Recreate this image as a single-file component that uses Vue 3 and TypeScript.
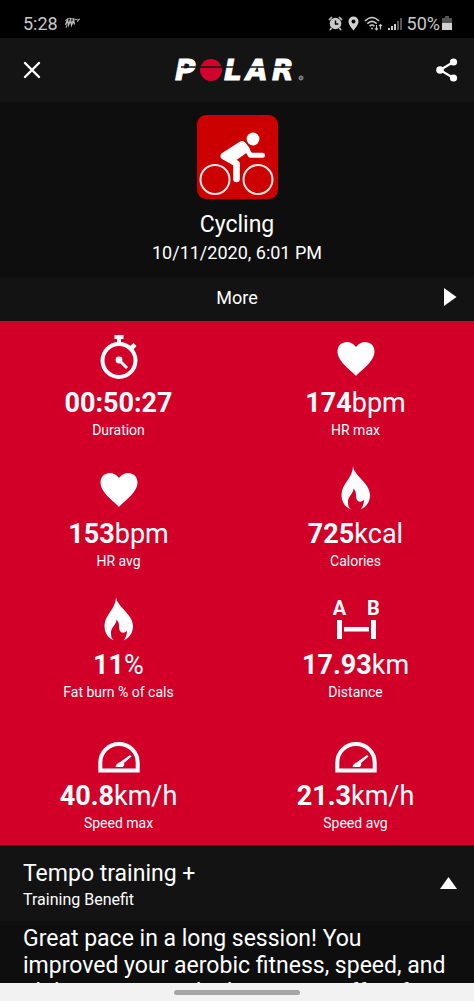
<script setup lang="ts">
import { ref } from 'vue'

type IconName = 'stopwatch' | 'heart' | 'flame' | 'distance' | 'gauge'

interface Metric {
  icon: IconName
  value: string
  unit: string
  label: string
}

const metrics: Metric[] = [
  { icon: 'stopwatch', value: '00:50:27', unit: '', label: 'Duration' },
  { icon: 'heart', value: '174', unit: 'bpm', label: 'HR max' },
  { icon: 'heart', value: '153', unit: 'bpm', label: 'HR avg' },
  { icon: 'flame', value: '725', unit: 'kcal', label: 'Calories' },
  { icon: 'flame', value: '11', unit: '%', label: 'Fat burn % of cals' },
  { icon: 'distance', value: '17.93', unit: 'km', label: 'Distance' },
  { icon: 'gauge', value: '40.8', unit: 'km/h', label: 'Speed max' },
  { icon: 'gauge', value: '21.3', unit: 'km/h', label: 'Speed avg' },
]

const benefitOpen = ref(true)
</script>

<template>
  <div class="screen">
    <div class="status">
      <span>5:28</span>
      <svg class="carrier" width="17" height="12" viewBox="0 0 17 12" fill="none" stroke="#b5b5b5">
        <path d="M1 3.500Q5 0 10 2T16 2M14.500 2.500 13.500 5M2 11 3 8" stroke-width="1" />
        <path d="M1.500 8 3.500 3 4.500 8 6.500 3 7.500 8 9.500 3 10.500 7.500" stroke-width="1.500" />
      </svg>
      <div class="status-icons">
        <svg width="15" height="15" viewBox="0 0 15 15">
          <circle cx="7.500" cy="7.500" r="5.800" fill="#c9c9c9" />
          <path d="M7.500 4.500V8H10.300" fill="none" stroke="#000" stroke-width="1.400" />
          <path d="M1 4 4 1M11 1l3 3M3.500 12 2 14M11.500 12 13 14" stroke="#c9c9c9" stroke-width="1.700" />
        </svg>
        <svg width="11" height="15" viewBox="0 0 11 15">
          <path fill="#d2d2d2" fill-rule="evenodd" d="M5.500.5A5 5 0 0 0 .5 5.500C.5 9 5.500 14.500 5.500 14.500S10.500 9 10.500 5.500A5 5 0 0 0 5.500.5ZM5.500 3.500a2 2 0 1 1 0 4 2 2 0 0 1 0-4Z" />
        </svg>
        <svg width="19" height="15" viewBox="0 0 19 15" fill="none" stroke="#c9c9c9" stroke-width="1.600">
          <path d="M1 5Q8 -2 15 5M3.300 7.600Q8 3 12.700 7.600M5.600 10.200Q8 7.800 10.400 10.200" />
          <circle cx="8" cy="12.500" r="1" fill="#c9c9c9" stroke="none" />
          <path d="M12.500 9v5M11 12.300l1.500 1.600 1.500-1.600M16.500 13.500v-5M15 10.200l1.500-1.600 1.500 1.600" stroke-width="1.100" />
        </svg>
        <svg width="14" height="15" viewBox="0 0 14 15">
          <path fill="#c9c9c9" d="M0 12h2v2H0zM3 10h2v4H3zM6 8h2v6H6z" />
          <path fill="#555" d="M9 5h2v9H9zM12 2h2v12h-2z" />
        </svg>
        <div class="battery">
          <span>50%</span>
          <svg width="10" height="15" viewBox="0 0 10 15">
            <path fill="#555" d="M3 0h4v2h3v6H0V2h3z" />
            <path fill="#d2d2d2" d="M0 7h10v7H0z" />
          </svg>
        </div>
      </div>
    </div>

    <header class="topbar">
      <button type="button" aria-label="Close">
        <svg width="18" height="18" viewBox="0 0 18 18" fill="none" stroke="#fff" stroke-width="2.400" stroke-linecap="round">
          <path d="M2 2 16 16M16 2 2 16" />
        </svg>
      </button>
      <svg class="logo" width="132" height="28" viewBox="0 0 132 28" role="img" aria-label="Polar">
        <g class="wordmark">
          <text x="2" y="24">P</text>
          <text x="51 73 99" y="24">LAR</text>
        </g>
        <circle cx="38" cy="14" r="11" fill="#d2042b" />
        <path d="M8 11H124" stroke="#141414" stroke-width="1.600" />
        <circle cx="128" cy="22" r="2" fill="#555" stroke="#999" stroke-width="1" />
      </svg>
      <button type="button" aria-label="Share">
        <svg width="22" height="24" viewBox="0 0 22 24" fill="#fff">
          <path d="M17.500 4 4 12 17.500 20" fill="none" stroke="#fff" stroke-width="2.200" />
          <circle cx="17.500" cy="4" r="3.600" />
          <circle cx="4" cy="12" r="3.800" />
          <circle cx="17.500" cy="20" r="3.600" />
        </svg>
      </button>
    </header>

    <section class="hero">
      <svg width="81" height="84" viewBox="0 0 81 84" fill="none" stroke="#fff" stroke-linecap="round" stroke-linejoin="round">
        <rect width="81" height="84" rx="9" fill="#cc0000" stroke="none" />
        <g stroke="#ffe9e4" stroke-width="2">
          <circle cx="18" cy="64.500" r="14.500" />
          <circle cx="61" cy="64.500" r="14.500" />
        </g>
        <circle cx="56" cy="24" r="6.400" fill="#fff" stroke="none" />
        <path d="M27 41 45 29.500 49 34 35 44Z" fill="#fff" stroke-width="7" />
        <path d="M47 30 53.500 40.300H65.500" stroke-width="5" />
        <path d="M28 42 39.500 48.500V64" stroke-width="6.600" />
      </svg>
      <h1>Cycling</h1>
      <time datetime="2020-10-11T18:01">10/11/2020, 6:01 PM</time>
    </section>

    <button type="button" class="more">
      <span>More</span>
      <svg width="13" height="18" viewBox="0 0 13 18"><path d="M0 0 12.500 9 0 18Z" fill="#fff" /></svg>
    </button>

    <section class="metrics">
      <div v-for="metric in metrics" :key="metric.label" class="metric">
        <svg class="metric-icon" width="44" height="44" viewBox="0 0 44 44" fill="#fff">
          <template v-if="metric.icon === 'stopwatch'">
            <circle cx="22" cy="25.500" r="16.500" fill="none" stroke="#fff" stroke-width="4" />
            <path d="M17.500 0h9v4H24v5h-4V4h-2.500zM32.500 11.500l4-3.500 3 3-3.500 4z" />
            <circle cx="22" cy="25" r="3.400" />
            <path d="M22 25 30 33" stroke="#fff" stroke-width="3" />
          </template>
          <path
            v-else-if="metric.icon === 'heart'"
            d="M22 41C18 36 3.500 27 3.500 16.500 3.500 6 16 3.500 22 12 28 3.500 40.500 6 40.500 16.500 40.500 27 26 36 22 41Z"
          />
          <path
            v-else-if="metric.icon === 'flame'"
            d="M19 0C20 10 36 17 36 29C36 35.500 33 40.500 26.500 43.500C29 40.500 30 37.500 30 33.500C28.500 36 24.500 36.500 23 34C21 30.500 23.500 26.500 19.500 22.500C19.500 28 13.500 30 14 37C14 40 15 42 17 43.500C10 40.500 7.500 35 7.500 28.500C7.500 18 19 12 19 0Z"
          />
          <template v-else-if="metric.icon === 'distance'">
            <text class="marker" x="5.500" y="18">A</text>
            <text class="marker" x="39.500" y="18">B</text>
            <path d="M3 23h5v19H3zM37 23h5v19h-5zM10 30h25v4.500H10z" />
          </template>
          <template v-else>
            <path d="M3.300 42.500V34.500a18.700 18.500 0 0 1 37.400 0v8Z" fill="none" stroke="#fff" stroke-width="4" />
            <path d="M34.500 28.500 33 27 22.500 34.500Q19 35.500 18.500 39H26Q28 37 27 35Z" />
          </template>
        </svg>
        <div class="value"><strong>{{ metric.value }}</strong>{{ metric.unit }}</div>
        <div class="label">{{ metric.label }}</div>
      </div>
    </section>

    <button type="button" class="benefit" :aria-expanded="benefitOpen" @click="benefitOpen = !benefitOpen">
      <span class="benefit-text">
        <span class="benefit-title">Tempo training +</span>
        <span class="benefit-sub">Training Benefit</span>
      </span>
      <svg width="17" height="12" viewBox="0 0 17 12"><path d="M0 12 8.500 0 17 12Z" fill="#fff" /></svg>
    </button>
    <div class="description">
      <p v-if="benefitOpen">
        Great pace in a long session! You improved your aerobic fitness, speed, and ability to sustain high intensity effort for longer.
      </p>
    </div>

    <div class="navbar"><div class="handle"></div></div>
  </div>
</template>

<style>
body {
  margin: 0;
  background: #0e0e0e;
}
</style>

<style scoped>
.screen {
  display: flex;
  flex-direction: column;
  height: 100vh;
  overflow: hidden;
  background: #0e0e0e;
  color: #fff;
  font-family: Roboto, "Liberation Sans", sans-serif;
}

.screen > * {
  flex-shrink: 0;
}

svg {
  display: block;
}

button {
  padding: 0;
  border: 0;
  background: none;
  color: inherit;
  font: inherit;
  cursor: pointer;
}

.status {
  display: flex;
  align-items: center;
  box-sizing: border-box;
  height: 38px;
  padding: 8px 22px 0 23px;
  background: #000;
  color: #c9c9c9;
  font-size: 18px;
}

.carrier {
  margin-left: 6px;
}

.status-icons {
  display: flex;
  align-items: center;
  gap: 5px;
  margin-left: auto;
}

.battery {
  display: flex;
  align-items: center;
  gap: 2px;
}

.topbar {
  display: flex;
  align-items: center;
  justify-content: space-between;
  height: 64px;
  padding: 0 16px 0 23px;
  background: #141414;
}

.logo {
  overflow: visible;
}

.wordmark {
  fill: #fff;
  stroke: #fff;
  stroke-width: 1px;
  font: italic bold 28px "DejaVu Sans", sans-serif;
}

.hero {
  display: flex;
  flex-direction: column;
  align-items: center;
  padding: 13px 0 12px;
}

h1 {
  margin: 10px 0 0;
  font-size: 23px;
  font-weight: 400;
  line-height: 32px;
}

time {
  font-size: 18px;
  line-height: 24px;
}

.more {
  display: grid;
  grid-template-columns: 1fr auto 1fr;
  align-items: center;
  box-sizing: border-box;
  height: 44px;
  padding: 0 17px 4px;
  background: #131313;
  font-size: 18px;
}

.more span {
  grid-column: 2;
}

.more svg {
  justify-self: end;
}

.metrics {
  display: grid;
  grid-template-columns: 1fr 1fr;
  background: #d20028;
}

.metric {
  display: flex;
  flex-direction: column;
  align-items: center;
  padding: 14px 0 13px;
}

.metric-icon {
  overflow: visible;
}

.marker {
  font-size: 20px;
  font-weight: 700;
  text-anchor: middle;
}

.value {
  margin-top: 8px;
  font-size: 27px;
  line-height: 32px;
}

.label {
  margin-top: 2px;
  font-size: 14px;
  line-height: 18px;
}

.benefit {
  display: flex;
  align-items: center;
  justify-content: space-between;
  box-sizing: border-box;
  height: 76px;
  padding: 0 17px 0 23px;
  background: #131313;
  text-align: left;
}

.benefit-text {
  display: flex;
  flex-direction: column;
  padding-top: 6px;
}

.benefit-title {
  font-size: 23px;
  line-height: 28px;
}

.benefit-sub {
  font-size: 16px;
  line-height: 24px;
}

.description {
  flex: 1 1 0;
  min-height: 0;
  padding: 4px 23px 0;
  overflow: hidden;
}

p {
  margin: 0;
  font-size: 23px;
  line-height: 27px;
}

.navbar {
  display: flex;
  align-items: center;
  justify-content: center;
  height: 18px;
  background: #f2f2f2;
}

.handle {
  width: 126px;
  height: 5px;
  border-radius: 3px;
  background: #a5a5a5;
}
</style>
